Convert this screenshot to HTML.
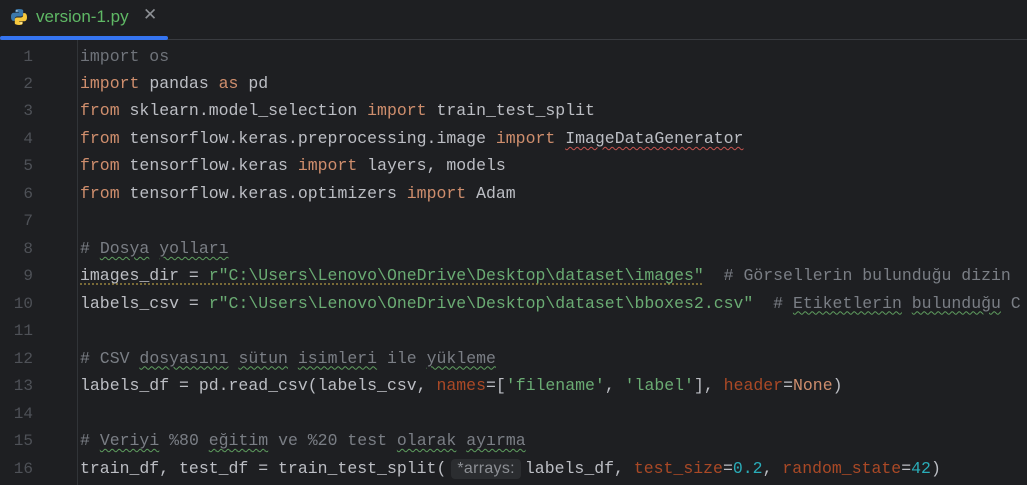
<!DOCTYPE html>
<html><head><meta charset="utf-8"><style>
html,body{margin:0;padding:0;width:1027px;height:485px;overflow:hidden;background:#1e1f22;}
.tab{position:absolute;left:0;top:0;width:1027px;height:39px;background:#1e1f22;border-bottom:1px solid #393b40;}
.tab .ul{position:absolute;left:0;top:36px;width:168px;height:4px;background:#3574f0;border-radius:2px;}
.tab .name{position:absolute;left:36px;top:7px;font:17px "Liberation Sans",sans-serif;color:#5fb865;}
.tab .x{position:absolute;left:143px;top:5px;font:17px "DejaVu Sans",sans-serif;color:#8c8f94;}
.gut{position:absolute;left:77px;top:40px;width:1px;height:445px;background:#313438;}
.ln{position:absolute;left:0;width:33px;text-align:right;font:16px "Liberation Mono",monospace;color:#4e5157;}
.code{position:absolute;left:80px;white-space:pre;font:16.5px "Liberation Mono",monospace;color:#bcbec4;}
.k{color:#cf8e6d}.s{color:#6aab73}.c{color:#7a7e85}.n{color:#2aacb8}.p{color:#aa4926}.g{color:#6f737a}
.w{text-decoration:underline wavy #5f9e5f;text-underline-offset:3px;text-decoration-thickness:1px}
.wr{text-decoration:underline wavy #c75450;text-underline-offset:3px;text-decoration-thickness:1px}
.d{text-decoration:underline dotted #8d7a3c;text-underline-offset:3px}
.hint{display:inline-block;background:#2b2d30;color:#8c8f94;border-radius:4px;font:16px "Liberation Sans",sans-serif;padding:1px 6px;margin:0 4px 0 5px;letter-spacing:0.3px}
</style></head><body>
<div class="tab">
<svg style="position:absolute;left:10px;top:8px" width="18" height="18" viewBox="0 0 18 18">
<path d="M8.8 1C5 1 5.3 2.6 5.3 2.6V4.3h3.6v.5H3.8S1 4.5 1 8.8s2.4 4.1 2.4 4.1h1.5v-2s-.1-2.4 2.4-2.4h3.6s2.3 0 2.3-2.2V2.7S13.5 1 8.8 1z" fill="#3c78aa"/>
<path d="M9.2 17c3.8 0 3.5-1.6 3.5-1.6V13.7H9.1v-.5h5.1s2.8.3 2.8-4-2.4-4.1-2.4-4.1h-1.5v2s.1 2.4-2.4 2.4H7.1s-2.3 0-2.3 2.2v3.6S4.5 17 9.2 17z" fill="#f7c93e"/>
<circle cx="6.9" cy="2.9" r=".7" fill="#fff"/><circle cx="11.1" cy="15.1" r=".7" fill="#fff"/></svg>
<div class="name">version-1.py</div><div class="x">✕</div><div class="ul"></div></div>
<div class="gut"></div>
<div id="lines"></div>
<script>
var L=[
'<span class="g">import os</span>',
'<span class="k">import</span> pandas <span class="k">as</span> pd',
'<span class="k">from</span> sklearn.model_selection <span class="k">import</span> train_test_split',
'<span class="k">from</span> tensorflow.keras.preprocessing.image <span class="k">import</span> <span class="wr">ImageDataGenerator</span>',
'<span class="k">from</span> tensorflow.keras <span class="k">import</span> layers, models',
'<span class="k">from</span> tensorflow.keras.optimizers <span class="k">import</span> Adam',
'',
'<span class="c"># <span class="w">Dosya</span> <span class="w">yolları</span></span>',
'<span class="d">images_dir = <span class="s">r"C:\\Users\\Lenovo\\OneDrive\\Desktop\\dataset\\images"</span></span>  <span class="c"># Görsellerin bulunduğu dizin</span>',
'labels_csv = <span class="s">r"C:\\Users\\Lenovo\\OneDrive\\Desktop\\dataset\\bboxes2.csv"</span>  <span class="c"># <span class="w">Etiketlerin</span> <span class="w">bulunduğu</span> C</span>',
'',
'<span class="c"># CSV <span class="w">dosyasını</span> <span class="w">sütun</span> <span class="w">isimleri</span> ile <span class="w">yükleme</span></span>',
'labels_df = pd.read_csv(labels_csv, <span class="p">names</span>=[<span class="s">\'filename\'</span>, <span class="s">\'label\'</span>], <span class="p">header</span>=<span class="k">None</span>)',
'',
'<span class="c"># <span class="w">Veriyi</span> %80 <span class="w">eğitim</span> ve %20 test <span class="w">olarak</span> <span class="w">ayırma</span></span>',
'train_df, test_df = train_test_split(<span class="hint">*arrays:</span>labels_df, <span class="p">test_size</span>=<span class="n">0.2</span>, <span class="p">random_state</span>=<span class="n">42</span>)'
];
var h='';
for(var i=0;i<L.length;i++){var t=43.5+i*27.47;
h+='<div class="ln" style="top:'+(t+4)+'px">'+(i+1)+'</div><div class="code" style="top:'+(t+3)+'px">'+L[i]+'</div>';}
document.getElementById('lines').innerHTML=h;
</script>
</body></html>
